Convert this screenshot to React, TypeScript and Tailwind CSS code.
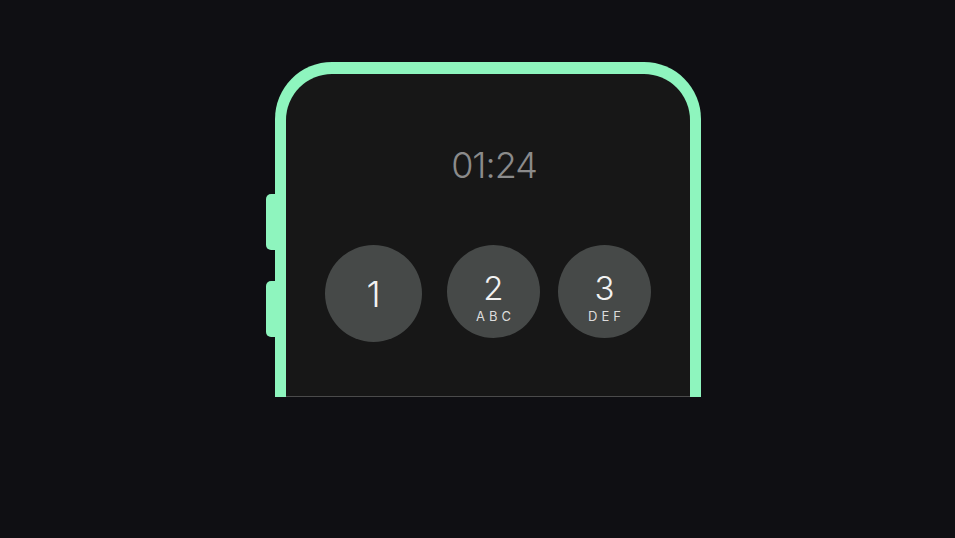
export default function App() {
  return (
    <div
      className="w-full h-[538px] bg-[#0f0f13] pl-[275px] pt-[62px] overflow-hidden"
      style={{ fontFamily: "Inter, 'Liberation Sans', sans-serif" }}
    >
      {/* Phone frame */}
      <div className="relative w-[426px] h-[335px]">
        {/* Side buttons */}
        <div className="absolute -left-[9px] top-[132px] w-[10px] h-[56px] rounded-l-[5px] bg-[#8ef5be]" />
        <div className="absolute -left-[9px] top-[219px] w-[10px] h-[56px] rounded-l-[5px] bg-[#8ef5be]" />

        <div className="w-full h-full bg-[#8ef5be] rounded-t-[57px] pt-[12px] px-[11px]">
          <div className="w-full h-full bg-[#171717] rounded-t-[46px] border-b border-[#4b4b4b] flex flex-col items-center">
            {/* Timer */}
            <div className="mt-[71px] pl-[12px] text-[36px] leading-[40px] font-light text-[#8b8b8b] tracking-[-1px]">
              01:24
            </div>

            {/* Keypad */}
            <div className="mt-[60px] flex items-start">
              <div className="w-[97px] h-[97px] rounded-full bg-[#464948] flex items-center justify-center">
                <span className="text-[36px] leading-none font-light text-[#f2f2f2]">1</span>
              </div>
              <div className="ml-[25px] w-[93px] h-[93px] rounded-full bg-[#464948] flex flex-col items-center pt-[27px]">
                <span className="text-[33px] leading-none font-light text-[#f2f2f2]">2</span>
                <span className="mt-[5px] pl-[4px] text-[13px] leading-none font-normal tracking-[4px] text-[#dcdcdc]">ABC</span>
              </div>
              <div className="ml-[18px] w-[93px] h-[93px] rounded-full bg-[#464948] flex flex-col items-center pt-[27px]">
                <span className="text-[33px] leading-none font-light text-[#f2f2f2]">3</span>
                <span className="mt-[5px] pl-[4px] text-[13px] leading-none font-normal tracking-[4px] text-[#dcdcdc]">DEF</span>
              </div>
            </div>
          </div>
        </div>
      </div>
    </div>
  );
}
